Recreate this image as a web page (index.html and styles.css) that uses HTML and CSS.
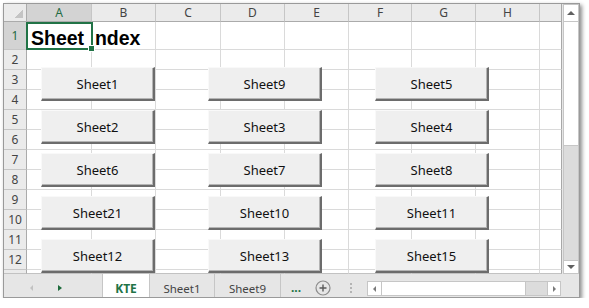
FILE: index.html
```html
<!DOCTYPE html>
<html lang="en">
<head>
    <meta charset="UTF-8">
    <title>Sheet Index - KTE</title>
    <link rel="stylesheet" href="styles.css">
</head>
<body>
    <div class="window">
        <div class="top">
            <div class="sheet">
                <div class="cells">
                    <div class="corner"></div>
                    <div class="ch sel">A</div><div class="ch">B</div><div class="ch">C</div><div class="ch">D</div><div class="ch">E</div><div class="ch">F</div><div class="ch">G</div><div class="ch">H</div><div class="ch"></div>

                    <div class="rh sel">1</div>
                    <div class="a1"><span class="title">Sheet Index</span><div class="cursor"><div class="handle"></div></div></div>
                    <div></div><div></div><div></div><div></div><div></div><div></div><div></div><div></div>

                    <div class="rh">2</div><div></div><div></div><div></div><div></div><div></div><div></div><div></div><div></div><div></div>
                    <div class="rh">3</div><div></div><div></div><div></div><div></div><div></div><div></div><div></div><div></div><div></div>
                    <div class="rh">4</div><div></div><div></div><div></div><div></div><div></div><div></div><div></div><div></div><div></div>
                    <div class="rh">5</div><div></div><div></div><div></div><div></div><div></div><div></div><div></div><div></div><div></div>
                    <div class="rh">6</div><div></div><div></div><div></div><div></div><div></div><div></div><div></div><div></div><div></div>
                    <div class="rh">7</div><div></div><div></div><div></div><div></div><div></div><div></div><div></div><div></div><div></div>
                    <div class="rh">8</div><div></div><div></div><div></div><div></div><div></div><div></div><div></div><div></div><div></div>
                    <div class="rh">9</div><div></div><div></div><div></div><div></div><div></div><div></div><div></div><div></div><div></div>
                    <div class="rh">10</div><div></div><div></div><div></div><div></div><div></div><div></div><div></div><div></div><div></div>
                    <div class="rh">11</div><div></div><div></div><div></div><div></div><div></div><div></div><div></div><div></div><div></div>
                    <div class="rh">12</div><div></div><div></div><div></div><div></div><div></div><div></div><div></div><div></div><div></div>
                    <div class="rh"></div><div></div><div></div><div></div><div></div><div></div><div></div><div></div><div></div><div></div>
                </div>

                <!-- shape buttons floating over the grid -->
                <div class="buttons">
                    <button>Sheet1</button><button>Sheet9</button><button>Sheet5</button>
                    <button>Sheet2</button><button>Sheet3</button><button>Sheet4</button>
                    <button>Sheet6</button><button>Sheet7</button><button>Sheet8</button>
                    <button>Sheet21</button><button>Sheet10</button><button>Sheet11</button>
                    <button>Sheet12</button><button>Sheet13</button><button>Sheet15</button>
                </div>
            </div>

            <div class="vscroll">
                <div class="arrow"><span class="tri-up"></span></div>
                <div class="thumb"></div>
                <div class="track"></div>
                <div class="arrow down"><span class="tri-down"></span></div>
            </div>
        </div>

        <div class="tabbar">
            <div class="nav"><span class="tri-left"></span><span class="tri-right"></span></div>
            <div class="tab active">KTE</div>
            <div class="tab">Sheet1</div>
            <div class="tab wide">Sheet9</div>
            <div class="more">...</div>
            <div class="add">
                <svg width="16" height="16" viewBox="0 0 16 16">
                    <circle cx="8" cy="8" r="7" fill="none" stroke="#8c8c8c" stroke-width="1.2"/>
                    <path d="M8 4.5v7M4.5 8h7" stroke="#5a5a5a" stroke-width="1.4"/>
                </svg>
            </div>
            <div class="grip"><span></span><span></span><span></span></div>
            <div class="hscroll">
                <div class="harrow"><span class="tri-left small"></span></div>
                <div class="hthumb"></div>
                <div class="htrack"></div>
                <div class="harrow right"><span class="tri-right small"></span></div>
            </div>
            <div class="filler"></div>
        </div>
    </div>
</body>
</html>
```

FILE: styles.css
```css
body {
    margin: 0;
    background: #fff;
    font-family: "Noto Sans", "Open Sans", sans-serif;
}
.window {
    width: 575px;
    height: 293px;
    margin: 3px 0 0 3px;
    border: 1px solid #9a9a9a;
    background: #e6e6e6;
    box-shadow: 2px 2px 4px rgba(0, 0, 0, 0.45);
    display: flex;
    flex-direction: column;
}
.top {
    display: flex;
    height: 270px;
}
.sheet {
    position: relative;
    width: 558px;
    overflow: hidden;
    background: #fff;
}
.cells {
    display: grid;
    grid-template-columns: 23px 65px 64px 65px 64px 64px 63px 64px 64px 22px;
    grid-template-rows: 18px 28px repeat(11, 20px) 4px;
}
.cells > div {
    box-sizing: border-box;
    border-right: 1px solid #dadada;
    border-bottom: 1px solid #dadada;
}
.cells > div:nth-child(10n) {
    border-right-color: #a8a8a8;
}
.cells > div:nth-last-child(-n+10) {
    border-bottom-color: #c2c2c2;
}
.cells .corner,
.cells .ch,
.cells .rh {
    background: #ebebeb;
    border-color: #c6c6c6;
    color: #444;
    font-size: 12px;
    display: flex;
    align-items: center;
    justify-content: center;
}
.cells .corner {
    border-bottom-color: #ababab;
    border-right-color: #ababab;
    background: #ebebeb linear-gradient(135deg, transparent 50%, #c4c4c4 50%) no-repeat right 3px bottom 3px / 9px 9px;
}
.cells .ch {
    border-bottom-color: #ababab;
}
.cells .rh {
    border-right-color: #ababab;
}
.cells .sel {
    background: #d3d3d3;
    color: #1f6b43;
}

/* A1 with the active cell cursor */
.a1 {
    position: relative;
}
.title {
    display: block;
    padding-left: 4px;
    font: bold 19.5px/33px "Liberation Sans", Arial, sans-serif;
    white-space: nowrap;
    color: #000;
}
.cursor {
    position: absolute;
    left: -1px;
    top: 0;
    width: 67px;
    height: 28px;
    box-sizing: border-box;
    border: 2px solid #217346;
    box-shadow: inset 0 0 0 1px #fff, 2px 0 0 #fff;
    z-index: 2;
}
.handle {
    position: absolute;
    right: -4px;
    bottom: -4px;
    width: 5px;
    height: 5px;
    background: #217346;
    border: 1px solid #fff;
}

/* buttons */
.buttons {
    position: absolute;
    left: 37px;
    top: 63px;
    display: grid;
    grid-template-columns: repeat(3, 114px);
    grid-auto-rows: 34px;
    column-gap: 53px;
    row-gap: 9px;
    z-index: 1;
}
.buttons button {
    box-sizing: border-box;
    padding: 0;
    background: #efefef;
    border: none;
    border-top: 1px solid #f9f9f9;
    border-left: 1px solid #f9f9f9;
    border-right: 2px solid #6c6c6c;
    border-bottom: 2px solid #6c6c6c;
    box-shadow: inset -1px -1px 0 #b4b4b4;
    font-family: "Noto Sans", "Open Sans", sans-serif;
    font-size: 13px;
    color: #111;
}

/* vertical scrollbar */
.vscroll {
    width: 16px;
    margin-left: 1px;
    box-sizing: border-box;
    border: 1px solid #c6c6c6;
    background: #dcdcdc;
    display: flex;
    flex-direction: column;
}
.vscroll .arrow {
    height: 16px;
    background: #fff;
    display: flex;
    align-items: center;
    justify-content: center;
}
.vscroll .arrow.down {
    height: 12px;
    border-top: 1px solid #c6c6c6;
}
.vscroll .thumb {
    height: 123px;
    background: #fff;
    border-top: 1px solid #c6c6c6;
    border-bottom: 1px solid #c6c6c6;
}
.vscroll .track {
    flex: 1;
}
.tri-up {
    border-left: 4px solid transparent;
    border-right: 4px solid transparent;
    border-bottom: 4px solid #606060;
}
.tri-down {
    border-left: 4px solid transparent;
    border-right: 4px solid transparent;
    border-top: 4px solid #606060;
}
.tri-left {
    border-top: 3.5px solid transparent;
    border-bottom: 3.5px solid transparent;
    border-right: 3px solid #c2c2c2;
}
.tri-right {
    border-top: 3.5px solid transparent;
    border-bottom: 3.5px solid transparent;
    border-left: 4px solid #1e6b3c;
}
.tri-left.small {
    border-right-color: #7a7a7a;
    border-top-width: 3px;
    border-bottom-width: 3px;
}
.tri-right.small {
    border-left: 3px solid #7a7a7a;
    border-top-width: 3px;
    border-bottom-width: 3px;
}

/* sheet tabs */
.tabbar {
    flex: 1;
    display: flex;
}
.nav {
    width: 99px;
    box-sizing: border-box;
    padding: 5px 0 0 26px;
    border-right: 1px solid #c6c6c6;
    display: flex;
    align-items: center;
    gap: 25px;
}
.tab {
    width: 65px;
    box-sizing: border-box;
    padding-top: 5px;
    border-right: 1px solid #c6c6c6;
    display: flex;
    align-items: center;
    justify-content: center;
    font-size: 11.5px;
    color: #444;
}
.tab.active {
    width: 47px;
    background: #fff;
    color: #217346;
    font-weight: bold;
    font-size: 12px;
}
.tab.wide {
    width: 66px;
}
.more {
    width: 30px;
    padding-top: 3px;
    display: flex;
    align-items: center;
    justify-content: center;
    color: #217346;
    font-weight: bold;
    font-size: 12px;
}
.add {
    width: 24px;
    padding-top: 5px;
    display: flex;
    align-items: center;
    justify-content: center;
}
.grip {
    width: 32px;
    padding-top: 5px;
    display: flex;
    flex-direction: column;
    align-items: center;
    justify-content: center;
    gap: 2px;
}
.grip span {
    width: 2px;
    height: 2px;
    background: #b4b4b4;
}
.hscroll {
    width: 194px;
    height: 15px;
    margin-top: 7px;
    box-sizing: border-box;
    border: 1px solid #c6c6c6;
    background: #dcdcdc;
    display: flex;
}
.harrow {
    width: 13px;
    background: #fff;
    border-right: 1px solid #c6c6c6;
    display: flex;
    align-items: center;
    justify-content: center;
}
.harrow.right {
    width: 12px;
    border-right: none;
    border-left: 1px solid #c6c6c6;
}
.hthumb {
    width: 143px;
    background: #fff;
    border-right: 1px solid #c6c6c6;
}
.htrack {
    flex: 1;
}
.filler {
    width: 18px;
}
```
